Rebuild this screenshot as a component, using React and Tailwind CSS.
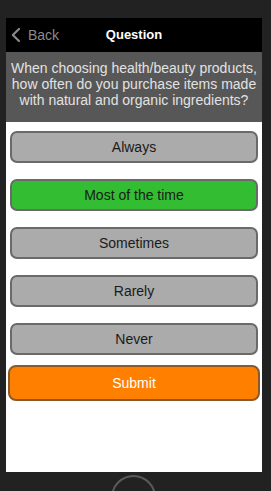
import React, { useState } from 'react';

const OPTIONS = ['Always', 'Most of the time', 'Sometimes', 'Rarely', 'Never'];

const App = () => {
  const [selected, setSelected] = useState('Most of the time');

  return (
    <div
      className="w-[271px] h-[491px] bg-[#222222] pt-[18px] overflow-hidden"
      style={{ fontFamily: '"Liberation Sans", Arial, sans-serif' }}
    >
      <div className="ml-[6px] w-[256px] flex flex-col">
        {/* nav bar */}
        <div className="h-[34px] bg-black relative flex items-center">
          <button className="flex items-center pl-[4px] text-[#8a8a8a] text-[14px]">
            <svg width="12" height="16" viewBox="0 0 12 16" className="mr-[6px]">
              <path d="M9 2 L2.8 8 L9 14" fill="none" stroke="#8a8a8a" strokeWidth="2.2" strokeLinecap="round" strokeLinejoin="round" />
            </svg>
            Back
          </button>
          <div className="absolute left-0 right-0 text-center text-white font-bold text-[13px] pointer-events-none">
            Question
          </div>
        </div>

        {/* question */}
        <div className="h-[70px] bg-[#575757] pt-[8px] px-[3px] text-center text-[#e2e2e2] text-[14px] leading-[16px]">
          When choosing health/beauty products, how often do you purchase items made with natural and organic ingredients?
        </div>

        {/* options */}
        <div className="h-[350px] bg-white px-[4px] pt-[9px] flex flex-col">
          <div className="flex flex-col gap-[16px]">
            {OPTIONS.map(opt => (
              <button
                key={opt}
                onClick={() => setSelected(opt)}
                className={`h-[32px] rounded-[7px] border-2 border-[#6a6a6a] text-[14px] text-[#1a1a1a] ${
                  selected === opt ? 'bg-[#33bd33]' : 'bg-[#ababab]'
                }`}
              >
                {opt}
              </button>
            ))}
          </div>
          <button className="mt-[10px] -mx-[2px] h-[36px] rounded-[8px] border-2 border-[#8a5a2a] bg-[#ff8000] text-white text-[14px]">
            Submit
          </button>
        </div>
      </div>

      {/* home button */}
      <div className="mt-[3px] ml-[111px] w-[45px] h-[45px] rounded-full border-2 border-[#5a5a5a]" />
    </div>
  );
};

export default App;
